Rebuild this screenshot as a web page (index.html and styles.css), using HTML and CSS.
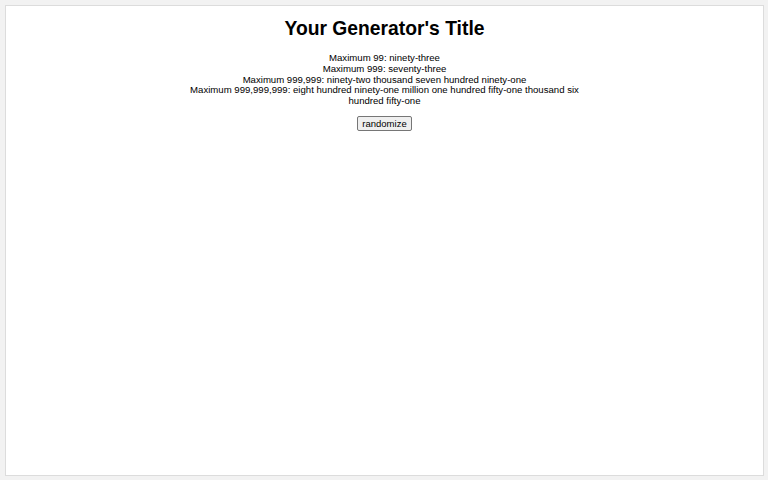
FILE: index.html
```html
<!DOCTYPE html>
<html>
<head>
<meta charset="utf-8">
<link rel="stylesheet" href="styles.css">
</head>
<body>
<div class="card">
  <h1 class="title">Your Generator's Title</h1>
  <div class="output">
    <div>Maximum 99: ninety-three</div>
    <div>Maximum 999: seventy-three</div>
    <div>Maximum 999,999: ninety-two thousand seven hundred ninety-one</div>
    <div>Maximum 999,999,999: eight hundred ninety-one million one hundred fifty-one thousand six hundred fifty-one</div>
  </div>
  <button class="btn">randomize</button>
</div>
</body>
</html>
```
FILE: styles.css
```css
html, body { margin: 0; padding: 0; height: 100%; }
body {
  background: #f2f2f2;
  padding: 5px 4px 4px 5px;
  box-sizing: border-box;
  font-family: "Liberation Sans", Arial, sans-serif;
}
.card {
  background: #fff;
  border: 1px solid #dcdcdc;
  height: 100%;
  box-sizing: border-box;
  display: flex;
  flex-direction: column;
  align-items: center;
  padding-top: 12px;
}
.title {
  font-size: 19.3px;
  font-weight: bold;
  margin: 0 0 13px;
  color: #000;
}
.output {
  font-size: 9.6px;
  line-height: 10.75px;
  text-align: center;
  max-width: 394px;
  color: #000;
}
.btn {
  margin-top: 9px;
  font-family: "Liberation Sans", Arial, sans-serif;
  font-size: 9.5px;
  padding: 1px 4px;
  background: #efefef;
  border: 1px solid #767676;
  border-radius: 2px;
  color: #000;
}
```
